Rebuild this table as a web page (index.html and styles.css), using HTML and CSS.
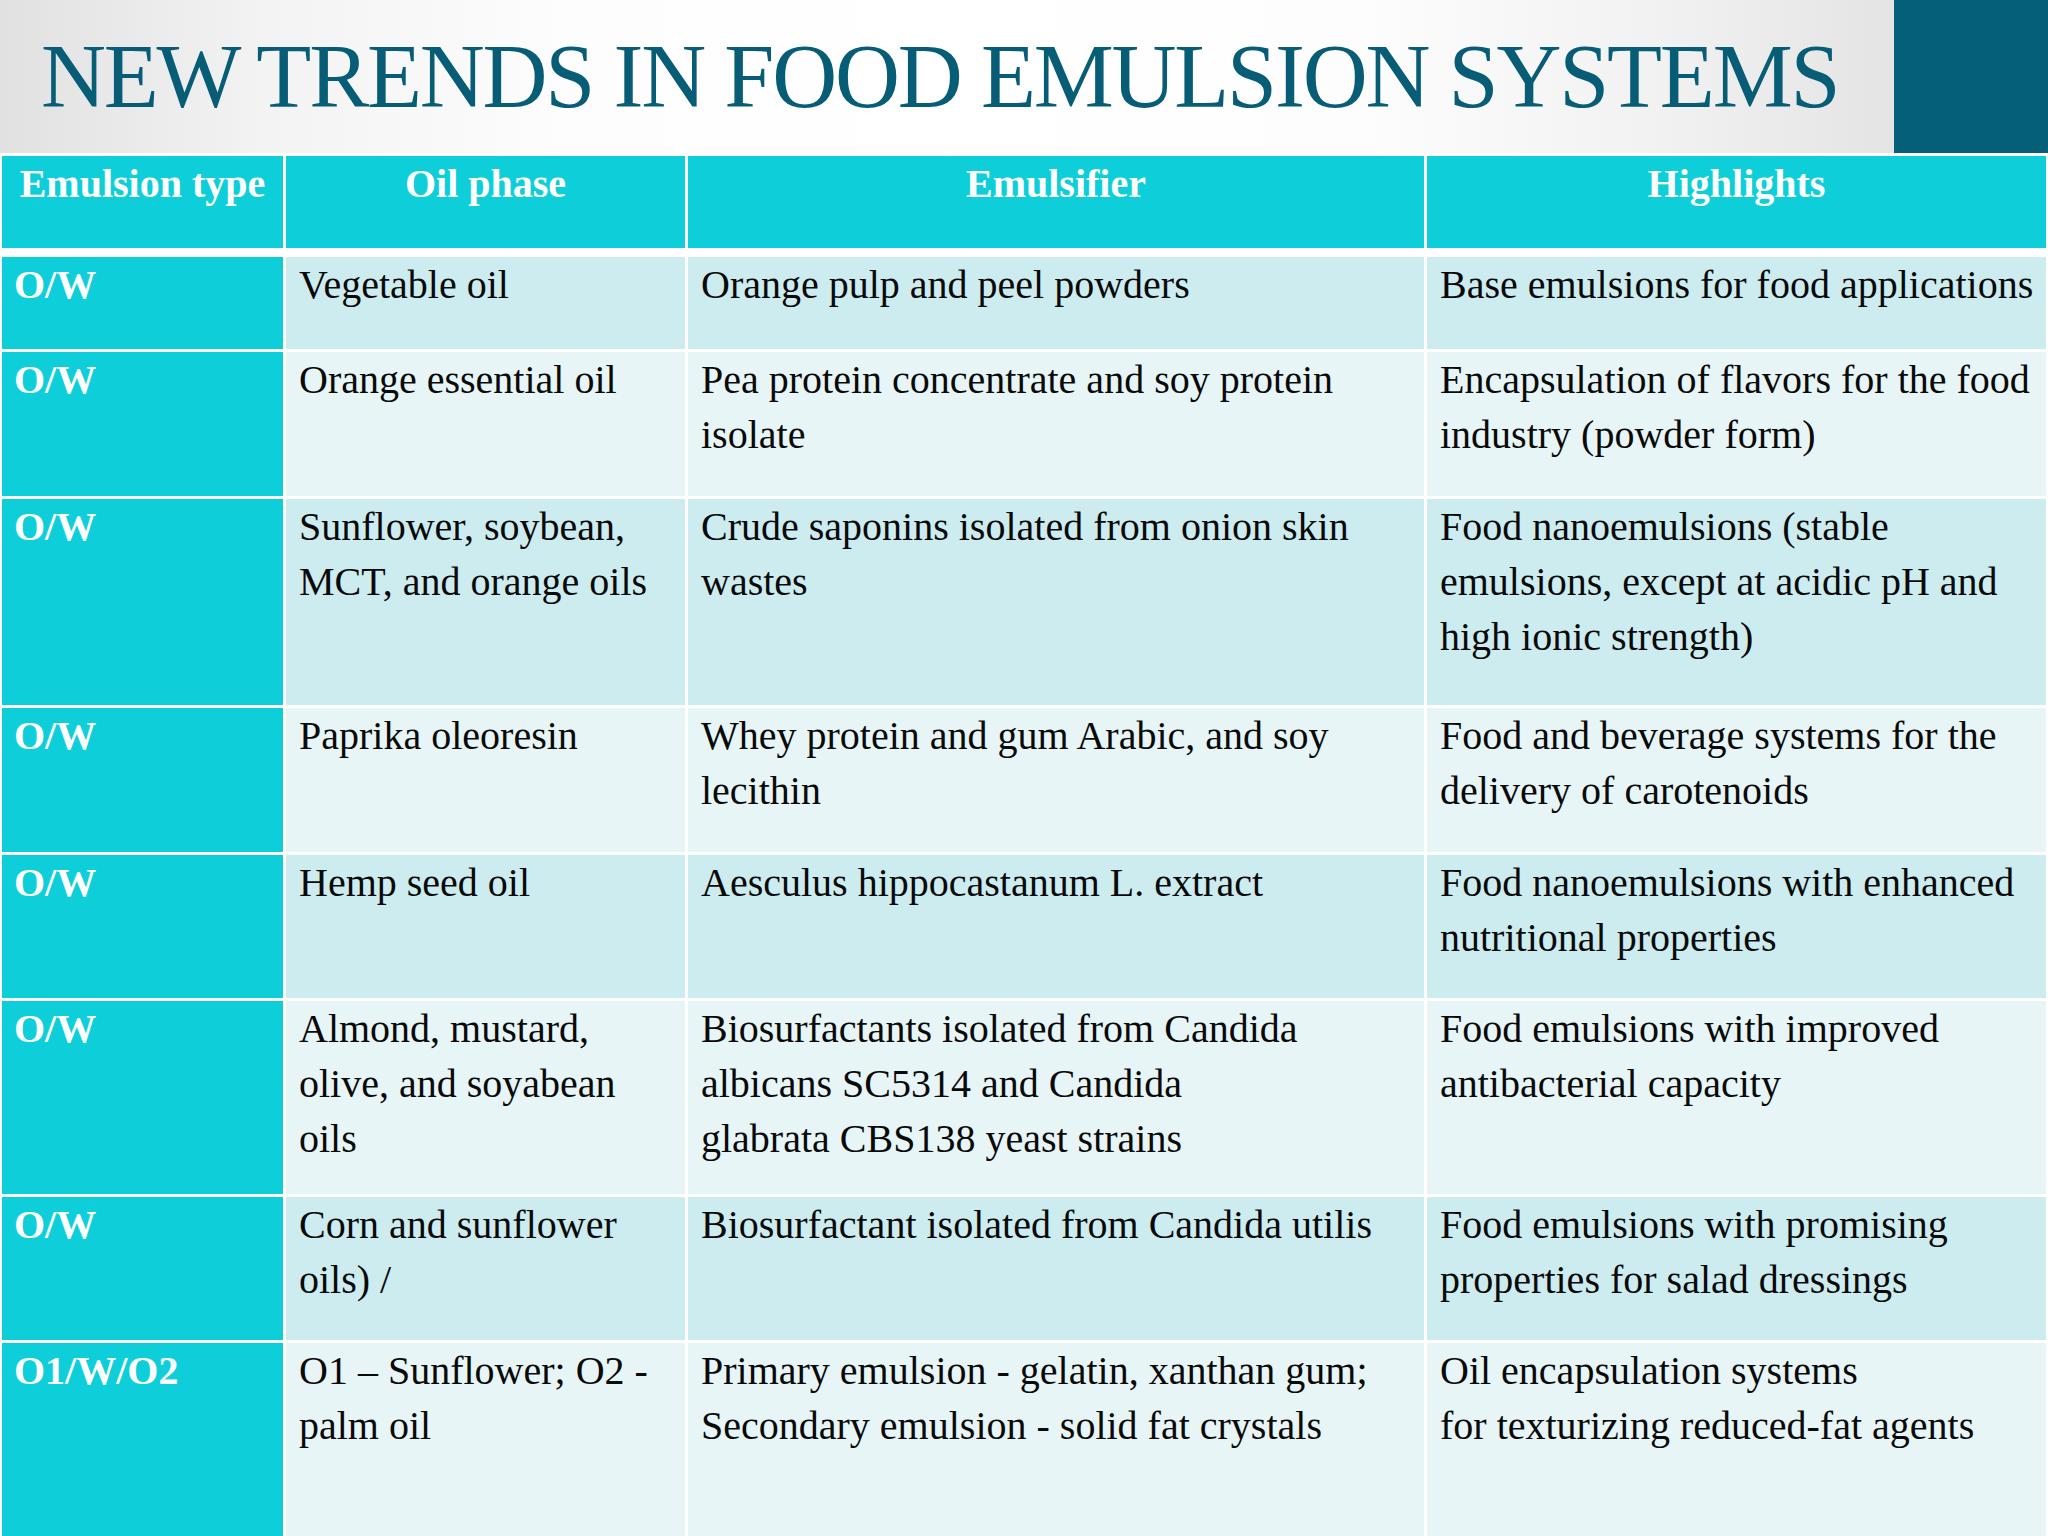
FILE: index.html
```html
<!DOCTYPE html>
<html lang="en">
<head>
<meta charset="utf-8">
<title>New Trends in Food Emulsion Systems</title>
<link rel="stylesheet" href="styles.css">
</head>
<body>
<div class="slide">
  <header class="top">
    <div class="title-area">
      <h1 class="title">NEW TRENDS IN FOOD EMULSION SYSTEMS</h1>
    </div>
    <div class="corner"></div>
  </header>

  <div class="table">
    <div class="head">
      <div class="hcell">Emulsion type</div>
      <div class="hcell">Oil phase</div>
      <div class="hcell">Emulsifier</div>
      <div class="hcell">Highlights</div>
    </div>

    <div class="body">
      <div class="type">O/W</div>
      <div class="cell odd">Vegetable oil</div>
      <div class="cell odd">Orange pulp and peel powders</div>
      <div class="cell odd">Base emulsions for food applications</div>

      <div class="type">O/W</div>
      <div class="cell even">Orange essential oil</div>
      <div class="cell even">Pea protein concentrate and soy protein<br>isolate</div>
      <div class="cell even">Encapsulation of flavors for the food<br>industry (powder form)</div>

      <div class="type">O/W</div>
      <div class="cell odd">Sunflower, soybean,<br>MCT, and orange oils</div>
      <div class="cell odd">Crude saponins isolated from onion skin<br>wastes</div>
      <div class="cell odd">Food nanoemulsions (stable<br>emulsions, except at acidic pH and<br>high ionic strength)</div>

      <div class="type">O/W</div>
      <div class="cell even">Paprika oleoresin</div>
      <div class="cell even">Whey protein and gum Arabic, and soy<br>lecithin</div>
      <div class="cell even">Food and beverage systems for the<br>delivery of carotenoids</div>

      <div class="type">O/W</div>
      <div class="cell odd">Hemp seed oil</div>
      <div class="cell odd">Aesculus hippocastanum L. extract</div>
      <div class="cell odd">Food nanoemulsions with enhanced<br>nutritional properties</div>

      <div class="type">O/W</div>
      <div class="cell even">Almond, mustard,<br>olive, and soyabean<br>oils</div>
      <div class="cell even">Biosurfactants isolated from Candida<br>albicans SC5314 and Candida<br>glabrata CBS138 yeast strains</div>
      <div class="cell even">Food emulsions with improved<br>antibacterial capacity</div>

      <div class="type">O/W</div>
      <div class="cell odd">Corn and sunflower<br>oils) /</div>
      <div class="cell odd">Biosurfactant isolated from Candida utilis</div>
      <div class="cell odd">Food emulsions with promising<br>properties for salad dressings</div>

      <div class="type">O1/W/O2</div>
      <div class="cell even">O1 – Sunflower; O2 -<br>palm oil</div>
      <div class="cell even">Primary emulsion - gelatin, xanthan gum;<br>Secondary emulsion - solid fat crystals</div>
      <div class="cell even">Oil encapsulation systems<br>for texturizing reduced-fat agents</div>
    </div>
  </div>
</div>
</body>
</html>
```

FILE: styles.css
```css
html, body {
  margin: 0;
  padding: 0;
  background: #ffffff;
}

body {
  width: 2048px;
  height: 1536px;
  overflow: hidden;
  font-family: "Liberation Serif", "Times New Roman", serif;
}

.slide {
  width: 2048px;
  height: 1536px;
  display: flex;
  flex-direction: column;
  overflow: hidden;
}

.top {
  display: flex;
  height: 153px;
  flex: none;
}

.title-area {
  flex: 1;
  background: linear-gradient(90deg, #e1e1e1 0%, #f3f3f3 14%, #fdfdfd 30%, #ffffff 50%, #fdfdfd 72%, #f1f1f1 88%, #e4e4e4 100%);
}

.title {
  margin: 0;
  padding: 32px 0 0 41px;
  font-family: "Liberation Serif", "Times New Roman", serif;
  font-weight: normal;
  font-size: 90px;
  line-height: 90px;
  letter-spacing: -2.2px;
  color: #075d76;
  white-space: nowrap;
}

.corner {
  width: 154px;
  flex: none;
  background: #065f78;
}

.table {
  margin-top: 3px;
  padding: 0 2px;
  display: flex;
  flex-direction: column;
  gap: 9px;
}

.head,
.body {
  display: grid;
  grid-template-columns: 281px 399px 736px 1fr;
  column-gap: 3px;
}

.head {
  grid-template-rows: 92px;
}

.body {
  row-gap: 3px;
  grid-template-rows: 92px 144px 206px 144px 143px 193px 143px 194px;
}

.hcell,
.type,
.cell {
  font-size: 40px;
  line-height: 55px;
  overflow: hidden;
}

.hcell {
  background: #0ecfd9;
  color: #ffffff;
  font-weight: bold;
  text-align: center;
  padding: 0 8px;
}

.type {
  background: #0ecfd9;
  color: #ffffff;
  font-weight: bold;
  padding: 0 12px 0 12px;
}

.cell {
  color: #0a0a0a;
  padding: 0 6px 0 13px;
}

.odd {
  background: #cdecf0;
}

.even {
  background: #e7f5f7;
}
```
